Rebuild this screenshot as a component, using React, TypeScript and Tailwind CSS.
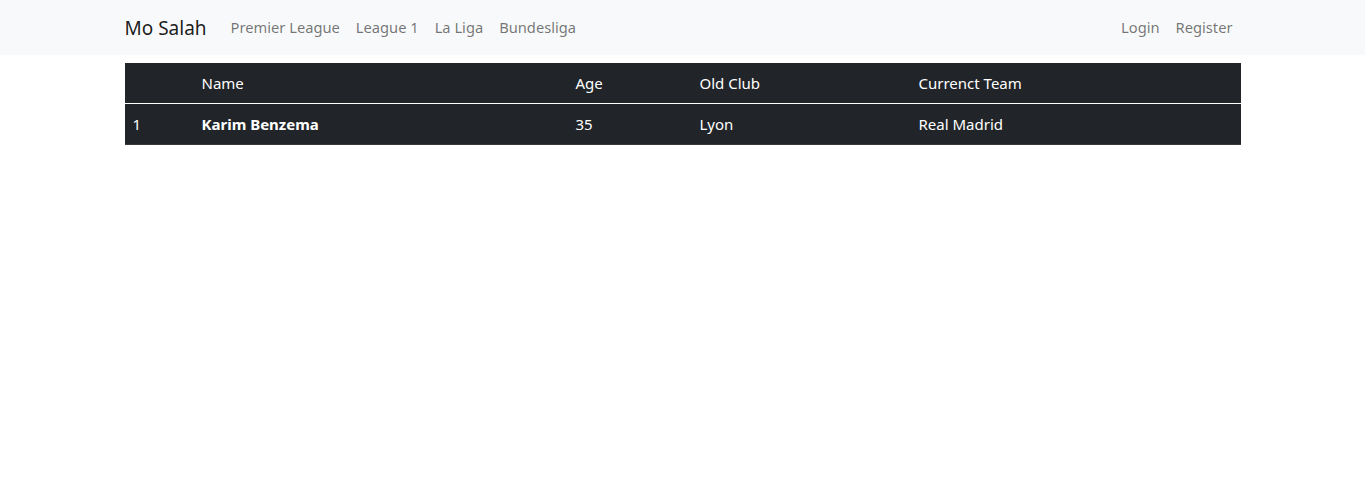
import React from 'react';

const players = [
  { id: 1, name: 'Karim Benzema', age: 35, oldClub: 'Lyon', team: 'Real Madrid' },
];

export default function App() {
  return (
    <div className="min-h-screen bg-white text-[#212529]" style={{ fontFamily: '"Noto Sans", "Open Sans", Arial, sans-serif' }}>
      {/* Navbar */}
      <nav className="bg-[#f8f9fa] h-[55px]">
        <div className="mx-auto max-w-[1140px] px-3 h-full flex items-center">
          <a className="text-[19px] leading-[30px] mr-4 text-black/90">Mo Salah</a>
          <ul className="flex items-center text-[14.7px] text-black/55">
            <li className="px-2">Premier League</li>
            <li className="px-2">League 1</li>
            <li className="px-2">La Liga</li>
            <li className="px-2">Bundesliga</li>
          </ul>
          <ul className="ml-auto flex items-center text-[14.7px] text-black/55">
            <li className="px-2">Login</li>
            <li className="px-2">Register</li>
          </ul>
        </div>
      </nav>

      {/* Table */}
      <div className="mx-auto max-w-[1140px] px-3 mt-2">
        <table className="w-full table-fixed bg-[#212529] text-white text-[15px] leading-6 border-collapse">
          <colgroup>
            <col className="w-[69px]" />
            <col className="w-[374px]" />
            <col className="w-[124px]" />
            <col className="w-[219px]" />
            <col />
          </colgroup>
          <thead>
            <tr className="border-b border-white">
              <th className="p-2 text-left font-normal"></th>
              <th className="p-2 text-left font-normal">Name</th>
              <th className="p-2 text-left font-normal">Age</th>
              <th className="p-2 text-left font-normal">Old Club</th>
              <th className="p-2 text-left font-normal">Currenct Team</th>
            </tr>
          </thead>
          <tbody>
            {players.map((p) => (
              <tr key={p.id} className="border-b border-[#373b3e]">
                <td className="p-2">{p.id}</td>
                <td className="p-2 font-bold">{p.name}</td>
                <td className="p-2">{p.age}</td>
                <td className="p-2">{p.oldClub}</td>
                <td className="p-2">{p.team}</td>
              </tr>
            ))}
          </tbody>
        </table>
      </div>
    </div>
  );
}
